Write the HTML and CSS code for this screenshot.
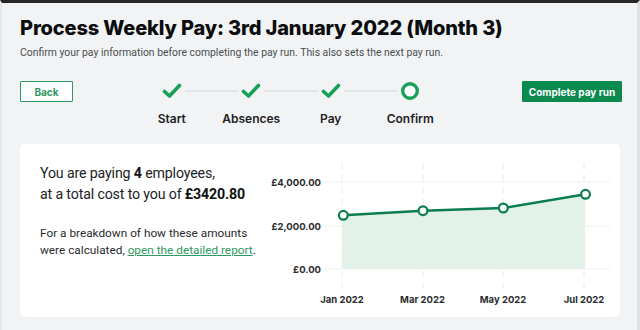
FILE: index.html
```html
<!DOCTYPE html>
<html lang="en">
<head>
<meta charset="utf-8">
<link rel="stylesheet" href="styles.css">
</head>
<body>
<div class="frame">
  <main class="page">
    <h1 class="title">Process Weekly Pay: 3rd January 2022 (Month 3)</h1>
    <p class="subtitle">Confirm your pay information before completing the pay run. This also sets the next pay run.</p>

    <div class="toolbar">
      <button class="btn btn-outline">Back</button>
      <ol class="stepper">
        <li class="step done">
          <svg class="icon" viewBox="0 0 20 16"><path d="M2.5 8.5 L7.5 13 L17.5 2.5" fill="none" stroke="#16a058" stroke-width="3.6" stroke-linecap="round" stroke-linejoin="round"/></svg>
          <span class="label">Start</span>
        </li>
        <li class="step done">
          <svg class="icon" viewBox="0 0 20 16"><path d="M2.5 8.5 L7.5 13 L17.5 2.5" fill="none" stroke="#16a058" stroke-width="3.6" stroke-linecap="round" stroke-linejoin="round"/></svg>
          <span class="label">Absences</span>
        </li>
        <li class="step done">
          <svg class="icon" viewBox="0 0 20 16"><path d="M2.5 8.5 L7.5 13 L17.5 2.5" fill="none" stroke="#16a058" stroke-width="3.6" stroke-linecap="round" stroke-linejoin="round"/></svg>
          <span class="label">Pay</span>
        </li>
        <li class="step current">
          <svg class="icon" viewBox="0 0 20 20"><circle cx="10" cy="10" r="7.3" fill="#fff" stroke="#16a058" stroke-width="3.4"/></svg>
          <span class="label">Confirm</span>
        </li>
      </ol>
      <button class="btn btn-primary">Complete pay run</button>
    </div>

    <section class="card">
      <div class="summary">
        <p class="lead">You are paying <strong>4</strong> employees,<br>at a total cost to you of <strong>£3420.80</strong></p>
        <p class="note">For a breakdown of how these amounts<br>were calculated, <a href="#" class="link">open the detailed report</a>.</p>
      </div>
      <svg class="chart" width="350" height="160" viewBox="262 152 350 160">
        <g stroke="#eeeff1" stroke-width="1">
          <line x1="322" y1="183" x2="610" y2="183"/>
          <line x1="322" y1="227" x2="610" y2="227"/>
          <line x1="322" y1="270" x2="610" y2="270"/>
        </g>
        <g stroke="#e6e8ea" stroke-width="1" stroke-dasharray="6 6">
          <line x1="342" y1="164" x2="342" y2="290"/>
          <line x1="423" y1="164" x2="423" y2="290"/>
          <line x1="503" y1="164" x2="503" y2="290"/>
          <line x1="584" y1="164" x2="584" y2="290"/>
        </g>
        <path d="M342 216.3 L423 211.7 L503 209 L585 195.3 L585 268 Q585 270 583 270 L344 270 Q342 270 342 268 Z" fill="#e2f2e8"/>
        <polyline points="343.3,216.3 423,211.7 503.3,209 585.5,195.3" fill="none" stroke="#0b7d4e" stroke-width="2.4" stroke-linejoin="round"/>
        <g fill="#fff" stroke="#0b7d4e" stroke-width="2.2">
          <circle cx="343.3" cy="216.3" r="4.4"/>
          <circle cx="423" cy="211.7" r="4.4"/>
          <circle cx="503.3" cy="209" r="4.4"/>
          <circle cx="585.5" cy="195.3" r="4.4"/>
        </g>
        <g class="axis" text-anchor="end">
          <text x="321" y="186.5">£4,000.00</text>
          <text x="321" y="231">£2,000.00</text>
          <text x="321" y="273.5">£0.00</text>
        </g>
        <g class="axis" text-anchor="middle">
          <text x="342" y="303.5">Jan 2022</text>
          <text x="422.5" y="303.5">Mar 2022</text>
          <text x="503" y="303.5">May 2022</text>
          <text x="584" y="303.5">Jul 2022</text>
        </g>
      </svg>
    </section>
  </main>
</div>
</body>
</html>
```

FILE: styles.css
```css
* { box-sizing: border-box; }
html, body { margin: 0; padding: 0; }
body {
  width: 640px;
  height: 330px;
  overflow: hidden;
  background: #f1f3f5;
  font-family: Inter, "Noto Sans", sans-serif;
  color: #1d1f21;
}
.frame {
  height: 330px;
  border-top: 3px solid #262626;
  border-left: 2px solid #e7eaec;
  border-right: 3px solid #dfe2e5;
  background: #f1f3f5;
}
.page {
  padding: 12px 15px 0 18px;
}
.title {
  margin: 0;
  font-size: 20px;
  line-height: 26px;
  font-weight: 800;
  letter-spacing: -0.15px;
  color: #0c0d0e;
}
.subtitle {
  margin: 5px 0 0;
  font-family: Roboto, "Noto Sans", sans-serif;
  font-size: 10.4px;
  line-height: 14px;
  color: #4a4e52;
}
.toolbar {
  display: flex;
  align-items: flex-start;
  margin-top: 20px;
  height: 62px;
}
.btn {
  font-family: Inter, "Noto Sans", sans-serif;
  font-size: 10px;
  font-weight: 700;
  height: 21px;
  padding: 0;
  border-radius: 1px;
  cursor: pointer;
}
.btn-outline {
  width: 53px;
  background: #fff;
  color: #2e9a62;
  border: 1px solid #2e9a62;
  margin-top: 1px;
}
.btn-primary {
  width: 100px;
  margin-left: auto;
  margin-top: 1px;
  background: #0a8a4f;
  color: #fff;
  border: 1px solid #0a8a4f;
}
.stepper {
  list-style: none;
  margin: 0 0 0 59px;
  padding: 0;
  display: grid;
  grid-template-columns: repeat(4, 79.5px);
}
.step {
  position: relative;
  display: flex;
  flex-direction: column;
  align-items: center;
}
.step + .step::before {
  content: "";
  position: absolute;
  top: 10px;
  left: calc(-50% + 13px);
  right: calc(50% + 13px);
  height: 2px;
  background: #e2e5e8;
}
.icon {
  width: 20px;
  height: 16px;
  margin-top: 3px;
  margin-bottom: 12px;
}
.current .icon {
  width: 20px;
  height: 20px;
  margin-top: 1px;
  margin-bottom: 10px;
}
.label {
  font-size: 12px;
  font-weight: 600;
  line-height: 16px;
  color: #1f2123;
}
.card {
  display: flex;
  margin-top: 2px;
  width: 600px;
  height: 173px;
  background: #fff;
  border-radius: 5px;
  overflow: hidden;
}
.summary {
  width: 242px;
  flex: none;
  padding: 19px 0 0 20px;
  white-space: nowrap;
}
.lead {
  margin: 0;
  font-family: Roboto, "Noto Sans", sans-serif;
  font-size: 14.2px;
  letter-spacing: -0.15px;
  line-height: 21px;
  color: #202224;
}
.lead strong { font-weight: 700; color: #111; }
.note {
  margin: 20px 0 0;
  font-family: Roboto, "Noto Sans", sans-serif;
  font-size: 11.8px;
  line-height: 17px;
  color: #2a2c2e;
}
.link {
  color: #2e9a62;
  text-decoration: underline;
}
.chart {
  display: block;
  margin-top: 7px;
  flex: none;
}
.axis {
  font-family: Inter, "Noto Sans", sans-serif;
  font-size: 9.5px;
  font-weight: 700;
  fill: #2a2c2e;
}
```
